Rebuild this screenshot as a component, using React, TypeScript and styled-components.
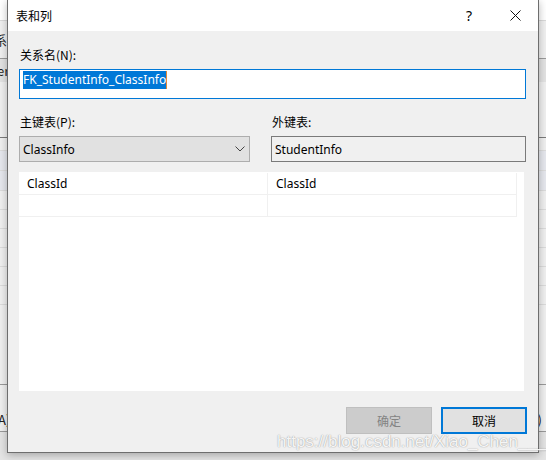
import styled, { createGlobalStyle } from "styled-components";

const GlobalStyle = createGlobalStyle`
  html, body {
    margin: 0;
    padding: 0;
    background: #f0f0f0;
  }
  body {
    font-family: "Noto Sans", "Noto Sans CJK SC", sans-serif;
    font-size: 12px;
    color: #000;
  }
`;

const Desktop = styled.div`
  position: relative;
  width: 546px;
  height: 460px;
  overflow: hidden;
  background: #f0f0f0;
`;

const BackWindow = styled.div`
  display: flex;
  flex-direction: column;
  width: 100%;
  height: 100%;
`;

const BackRow = styled.div<{ $h: number; $bg?: string; $line?: string }>`
  height: ${(p) => p.$h}px;
  flex: none;
  display: flex;
  align-items: center;
  justify-content: space-between;
  background: ${(p) => p.$bg ?? "#f0f0f0"};
  border-bottom: 1px solid ${(p) => p.$line ?? "#dedede"};
  box-sizing: border-box;
  font-family: "Noto Sans CJK SC", "Noto Sans", sans-serif;
  font-size: 13px;
  color: #222;
`;

const BackText = styled.span<{ $shift: number; $drop?: number }>`
  margin-left: ${(p) => p.$shift}px;
  margin-right: ${(p) => -p.$shift}px;
  margin-top: ${(p) => p.$drop ?? 0}px;
  white-space: nowrap;
`;

const Dialog = styled.div`
  position: absolute;
  left: 7px;
  top: 0;
  width: 532px;
  height: 453px;
  box-sizing: border-box;
  border: 1px solid #6e6e6e;
  border-top: none;
  background: #f0f0f0;
  box-shadow: 0 2px 8px rgba(0, 0, 0, 0.28);
  display: flex;
  flex-direction: column;
`;

const TitleBar = styled.div`
  height: 31px;
  flex: none;
  background: #fff;
  display: flex;
  align-items: center;
  padding-left: 8px;
  font-family: "Noto Sans CJK SC", sans-serif;
  font-size: 12px;
`;

const Title = styled.span`
  flex: 1;
`;

const TitleButton = styled.div`
  width: 46px;
  height: 31px;
  display: flex;
  align-items: center;
  justify-content: center;
  font-family: "Noto Sans", sans-serif;
  font-size: 14px;
`;

const Body = styled.div`
  flex: 1;
  display: flex;
  flex-direction: column;
  padding: 0 12px 0 11px;
`;

const Label = styled.div<{ $top: number }>`
  margin-top: ${(p) => p.$top}px;
  height: 16px;
  line-height: 16px;
  padding-left: 1px;
  font-family: "Noto Sans CJK SC", sans-serif;
  font-size: 12px;
`;

const NameInput = styled.div`
  margin-top: 6px;
  height: 30px;
  box-sizing: border-box;
  border: 1px solid #0078d7;
  background: #fff;
  display: flex;
  align-items: flex-start;
  padding: 1px 0 0 3px;
`;

const Selected = styled.span`
  background: #0078d7;
  color: #fff;
  height: 18px;
  line-height: 18px;
  font-family: "Noto Sans", sans-serif;
  font-size: 12px;
  border-right: 1px solid #e08a3a;
`;

const Columns = styled.div`
  display: grid;
  grid-template-columns: 231px 255px;
  column-gap: 21px;
  margin-top: 15px;
`;

const Field = styled.div`
  display: flex;
  flex-direction: column;
`;

const Combo = styled.div`
  margin-top: 6px;
  height: 26px;
  box-sizing: border-box;
  border: 1px solid #adadad;
  background: #e1e1e1;
  display: flex;
  align-items: center;
  justify-content: space-between;
  padding: 0 4px 0 3px;
  font-family: "Noto Sans", sans-serif;
`;

const ReadOnlyBox = styled.div`
  margin-top: 6px;
  height: 26px;
  box-sizing: border-box;
  border: 1px solid #7a7a7a;
  background: #f0f0f0;
  display: flex;
  align-items: center;
  padding-left: 3px;
  font-family: "Noto Sans", sans-serif;
`;

const Grid = styled.div`
  margin-top: 10px;
  margin-right: 2px;
  height: 219px;
  background: #fff;
  padding-top: 1px;
  box-sizing: border-box;
`;

const GridRow = styled.div`
  display: grid;
  grid-template-columns: 249px 249px;
  width: 498px;
`;

const Cell = styled.div`
  height: 22px;
  box-sizing: border-box;
  border-bottom: 1px solid #f0f0f0;
  border-right: 1px solid #f0f0f0;
  padding-left: 8px;
  line-height: 22px;
  font-family: "Noto Sans", sans-serif;
  font-size: 12px;
`;

const ButtonRow = styled.div`
  display: flex;
  justify-content: flex-end;
  gap: 9px;
  margin-top: 16px;
  margin-right: -1px;
`;

const Button = styled.div<{ $variant: "disabled" | "focus" }>`
  width: 86px;
  height: 27px;
  box-sizing: border-box;
  display: flex;
  align-items: center;
  justify-content: center;
  font-family: "Noto Sans CJK SC", sans-serif;
  font-size: 12px;
  background: ${(p) => (p.$variant === "disabled" ? "#cccccc" : "#e1e1e1")};
  border: ${(p) =>
    p.$variant === "disabled" ? "1px solid #bfbfbf" : "2px solid #0078d7"};
  color: ${(p) => (p.$variant === "disabled" ? "#838383" : "#000")};
`;

const Watermark = styled.div`
  position: absolute;
  left: 277px;
  top: 433px;
  line-height: 1;
  font-family: "Liberation Sans", Arial, sans-serif;
  font-size: 17px;
  color: rgba(255, 255, 255, 0.92);
  text-shadow: 0 0 1px rgba(0, 0, 0, 0.35), 0 0 2px rgba(0, 0, 0, 0.15);
  white-space: nowrap;
  pointer-events: none;
`;

function Chevron() {
  return (
    <svg width="10" height="6" viewBox="0 0 10 6">
      <path d="M0.5 0.5 L5 5 L9.5 0.5" fill="none" stroke="#444" strokeWidth="1" />
    </svg>
  );
}

function CloseIcon() {
  return (
    <svg width="11" height="11" viewBox="0 0 11 11">
      <path d="M0.5 0.5 L10.5 10.5 M10.5 0.5 L0.5 10.5" stroke="#111" strokeWidth="1" />
    </svg>
  );
}

export default function App() {
  return (
    <>
      <GlobalStyle />
      <Desktop>
        <BackWindow>
          <BackRow $h={21} $bg="#ffffff" $line="#d9d9d9" />
          <BackRow $h={38} $line="#9a9a9a">
            <BackText $shift={-6}>系</BackText>
          </BackRow>
          <BackRow $h={23} $bg="#e3e3e3" $line="#e3e3e3">
            <BackText $shift={-3}>er</BackText>
          </BackRow>
          <BackRow $h={56} $line="#7a7a7a" />
          <BackRow $h={13} $line="#dcdcdc" />
          <BackRow $h={20} $bg="#e6e8ee" $line="#dcdcdc" />
          <BackRow $h={20} $bg="#e6e8ee" $line="#dcdcdc" />
          <BackRow $h={19} $line="#dcdcdc" />
          <BackRow $h={19} $line="#dcdcdc" />
          <BackRow $h={19} $line="#dcdcdc" />
          <BackRow $h={19} $line="#dcdcdc" />
          <BackRow $h={19} $line="#dcdcdc" />
          <BackRow $h={19} $line="#dcdcdc" />
          <BackRow $h={80} $line="#9a9a9a" />
          <BackRow $h={47} $line="#9a9a9a">
            <BackText $shift={-2} $drop={22}>A)</BackText>
            <BackText $shift={-4} $drop={22}>C)</BackText>
          </BackRow>
          <BackRow $h={28} $bg="#e4e4e4" $line="#e4e4e4" />
        </BackWindow>

        <Dialog>
          <TitleBar>
            <Title>表和列</Title>
            <TitleButton>?</TitleButton>
            <TitleButton>
              <CloseIcon />
            </TitleButton>
          </TitleBar>
          <Body>
            <Label $top={16}>关系名(N):</Label>
            <NameInput>
              <Selected>FK_StudentInfo_ClassInfo</Selected>
            </NameInput>
            <Columns>
              <Field>
                <Label $top={0}>主键表(P):</Label>
                <Combo>
                  <span>ClassInfo</span>
                  <Chevron />
                </Combo>
              </Field>
              <Field>
                <Label $top={0}>外键表:</Label>
                <ReadOnlyBox>StudentInfo</ReadOnlyBox>
              </Field>
            </Columns>
            <Grid>
              <GridRow>
                <Cell>ClassId</Cell>
                <Cell>ClassId</Cell>
              </GridRow>
              <GridRow>
                <Cell />
                <Cell />
              </GridRow>
            </Grid>
            <ButtonRow>
              <Button $variant="disabled">确定</Button>
              <Button $variant="focus">取消</Button>
            </ButtonRow>
          </Body>
        </Dialog>
        <Watermark>https://blog.csdn.net/Xiao_Chen_____</Watermark>
      </Desktop>
    </>
  );
}
